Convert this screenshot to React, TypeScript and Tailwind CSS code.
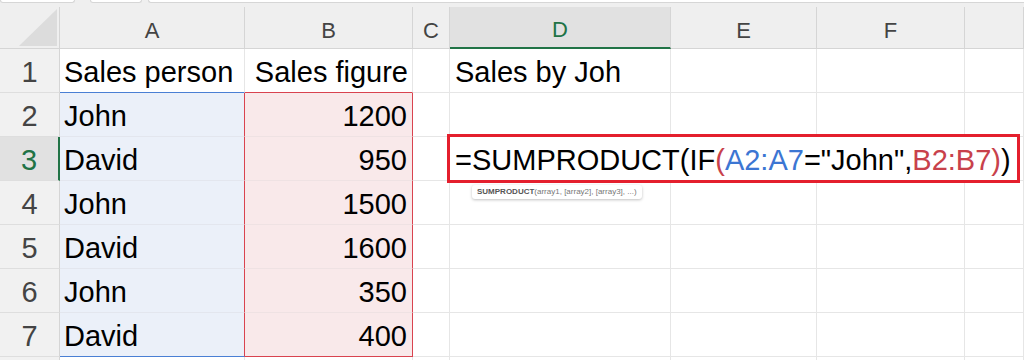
import React from 'react';

const COLS = ['A', 'B', 'C', 'D', 'E', 'F', ''];

const ROWS: string[][] = [
  ['Sales person', 'Sales figure', '', 'Sales by Joh', '', '', ''],
  ['John', '1200', '', '', '', '', ''],
  ['David', '950', '', '', '', '', ''],
  ['John', '1500', '', '', '', '', ''],
  ['David', '1600', '', '', '', '', ''],
  ['John', '350', '', '', '', '', ''],
  ['David', '400', '', '', '', '', ''],
  ['', '', '', '', '', '', ''],
];

const base =
  'flex items-end pb-[3px] text-[29px] leading-[34px] text-black whitespace-nowrap overflow-hidden border-r border-b ';

// cell look, incl. the coloured outlines of the ranges A2:A7 and B2:B7
function cellClass(n: number, c: number) {
  const inRange = n >= 2 && n <= 7;
  if (c === 0) {
    if (n === 1) return base + 'bg-white pl-[4px] border-r-[#e6e6e6] border-b-[#4a7fd4]';
    if (n === 7) return base + 'bg-[#ebf0f9] pl-[4px] border-r-[#d9434f] border-b-[#4a7fd4]';
    if (inRange) return base + 'bg-[#ebf0f9] pl-[4px] border-r-[#d9434f] border-b-[#e3e6ee]';
    return base + 'bg-white pl-[4px] border-[#e6e6e6]';
  }
  if (c === 1) {
    if (n === 1) return base + 'bg-white justify-end pr-[4px] border-r-[#e6e6e6] border-b-[#d9434f]';
    if (n === 7) return base + 'bg-[#f9e9ea] justify-end pr-[5px] border-r-[#d9434f] border-b-[#d9434f]';
    if (inRange) return base + 'bg-[#f9e9ea] justify-end pr-[5px] border-r-[#d9434f] border-b-[#efe2e3]';
    return base + 'bg-white justify-end pr-[5px] border-[#e6e6e6]';
  }
  return base + 'bg-white pl-[5px] border-[#e6e6e6]';
}

const Corner = () => (
  <div className="flex items-end justify-end pr-[2px] pb-[2px] border-r border-b border-[#d5d5d5]">
    <svg width="38" height="37" viewBox="0 0 38 37">
      <polygon points="38,0 38,37 0,37" fill="#dcdcdc" />
    </svg>
  </div>
);

const App = () => {
  return (
    <div className="relative w-[1024px] h-[360px] overflow-hidden bg-[#efefef] font-['Liberation_Sans',Arial,sans-serif]">
      {/* remains of the formula bar above the sheet */}
      <div className="flex h-[7px] gap-[15px]">
        <div className="w-[75px] h-[3px] bg-white border-b border-x border-[#d6d6d6] rounded-b-[3px]" />
        <div className="w-[52px] h-[3px] bg-white border-b border-x border-[#d6d6d6] rounded-b-[3px]" />
        <div className="flex-1 h-[3px] bg-white border-b border-l border-[#d6d6d6] rounded-bl-[3px] -ml-[9px]" />
      </div>

      <div className="grid grid-cols-[60px_185px_168px_37px_221px_146px_148px_59px] grid-rows-[42px_repeat(8,44px)]">
        {/* column headers */}
        <Corner />
        {COLS.map((c) => (
          <div
            key={c || 'g'}
            className={
              c === 'D'
                ? 'flex items-center justify-center pt-[5px] text-[22px] text-[#217346] bg-[#e1e1e1] border-r border-[#d5d5d5] border-b-2 border-b-[#217346]'
                : 'flex items-center justify-center pt-[5px] text-[22px] text-[#444] border-r border-b border-[#d5d5d5]'
            }
          >
            {c}
          </div>
        ))}

        {ROWS.map((row, r) => {
          const n = r + 1;
          return (
            <React.Fragment key={n}>
              <div
                className={
                  n === 3
                    ? 'flex items-end justify-center pb-[3px] text-[29px] leading-[34px] text-[#217346] bg-[#e1e1e1] border-b border-[#dedede] border-r-2 border-r-[#217346]'
                    : 'flex items-end justify-center pb-[3px] text-[29px] leading-[34px] text-[#444] bg-[#f1f1f1] border-b border-[#dedede] border-r border-r-[#d5d5d5]'
                }
              >
                {n <= 7 ? n : ''}
              </div>
              {row.map((v, c) => (
                <div key={c} className={cellClass(n, c)}>
                  {v}
                </div>
              ))}
            </React.Fragment>
          );
        })}
      </div>

      {/* cell being edited, drawn over D3:G3 */}
      <div className="absolute left-[447px] top-[134px] w-[573px] h-[49px] border-[3px] border-[#e41f2d] bg-white flex items-end pl-[5px] pb-[3px] text-[29px] leading-[34px] text-black whitespace-nowrap">
        <span>
          =SUMPRODUCT(IF<span className="text-[#c8414b]">(</span>
          <span className="text-[#3c76d3]">A2:A7</span>="John",
          <span className="text-[#c8414b]">B2:B7)</span>)
        </span>
      </div>

      {/* function hint */}
      <div className="absolute left-[472px] top-[185px] h-[14px] px-[5px] bg-white rounded-[3px] shadow-[0_1px_3px_rgba(0,0,0,0.25)] text-[8px] leading-[14px] text-[#777] whitespace-nowrap">
        <span className="font-bold text-[#555]">SUMPRODUCT</span>(array1, [array2], [array3], ...)
      </div>
    </div>
  );
};

export default App;
